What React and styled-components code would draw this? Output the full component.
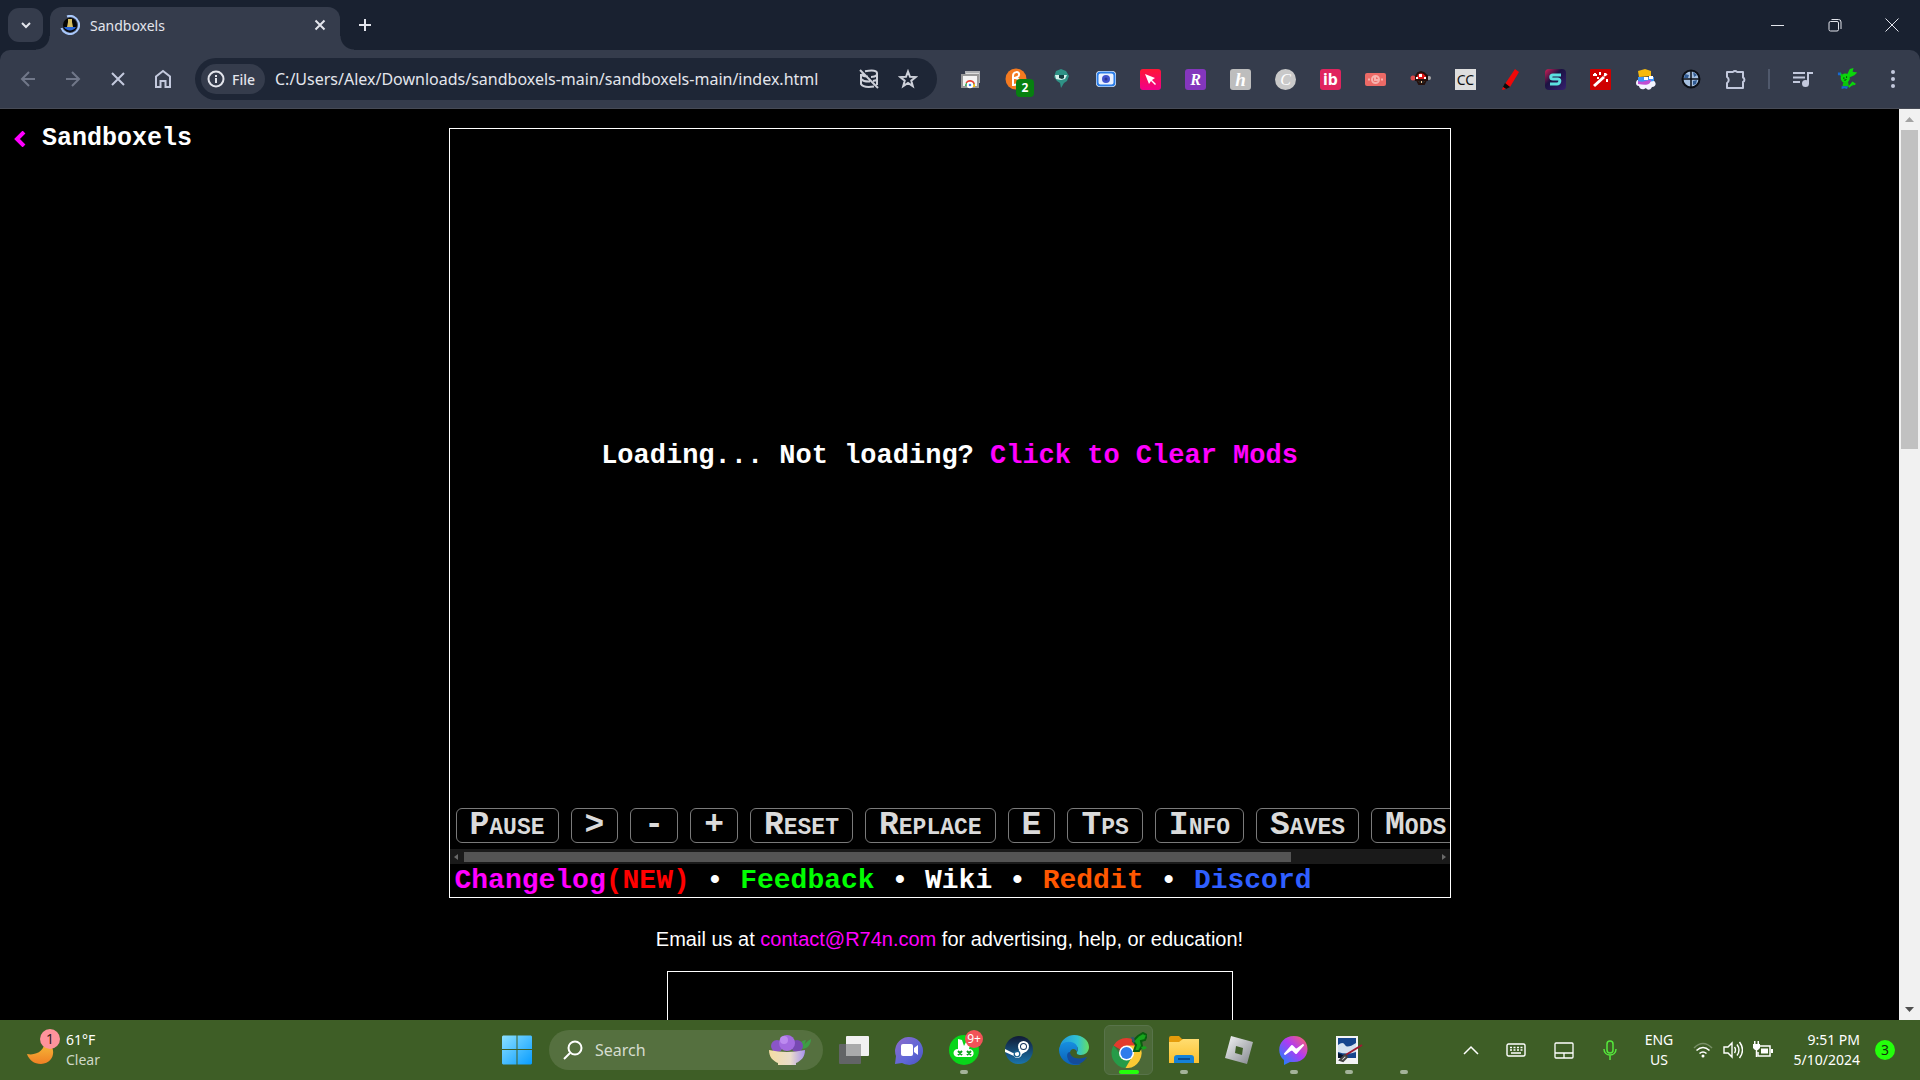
import React from "react";
import styled, { createGlobalStyle } from "styled-components";

const UI = '"Noto Sans", "Open Sans", sans-serif';
const PIXEL = '"Liberation Mono", "DejaVu Sans Mono", monospace';
const STRIP = "#192130";
const BAR = "#353c4c";

const Global = createGlobalStyle`
  * { box-sizing: border-box; }
  html, body { margin: 0; height: 100%; background: #000; overflow: hidden; }
  button { font: inherit; color: inherit; background: none; border: 0; padding: 0; margin: 0; }
  a { text-decoration: none; }
  svg { display: block; flex: none; }
`;

const Screen = styled.div`
  height: 100vh;
  display: flex;
  flex-direction: column;
  font-family: ${UI};
  overflow: hidden;
`;

/* ---------- browser chrome ---------- */

const TabStrip = styled.div`
  display: flex;
  align-items: center;
  height: 50px;
  padding-left: 8px;
  background: ${STRIP};
  color: #e3e5ec;
`;
const TabSearch = styled.button`
  width: 35px;
  height: 34px;
  border-radius: 11px;
  background: ${BAR};
  display: grid;
  place-items: center;
`;
const Tab = styled.div`
  position: relative;
  align-self: flex-end;
  width: 290px;
  height: 43px;
  margin-left: 7px;
  padding: 0 14px 7px 10px;
  border-radius: 12px 12px 0 0;
  background: ${BAR};
  display: flex;
  align-items: center;
  gap: 10px;
  font-size: 14px;
  &::before, &::after {
    content: "";
    position: absolute;
    bottom: 0;
    width: 14px;
    height: 14px;
  }
  &::before { right: 100%; background: radial-gradient(circle at 0 0, transparent 13px, ${BAR} 14px); }
  &::after { left: 100%; background: radial-gradient(circle at 100% 0, transparent 13px, ${BAR} 14px); }
`;
const TabTitle = styled.span`flex: 1;`;
const NewTab = styled.button`
  width: 36px;
  height: 36px;
  margin-left: 7px;
  display: grid;
  place-items: center;
`;
const WindowButtons = styled.div`
  margin-left: auto;
  display: flex;
`;
const WindowButton = styled.button`
  width: 57px;
  height: 50px;
  display: grid;
  place-items: center;
`;
const ToolbarWrap = styled.div`background: ${STRIP};`;
const Toolbar = styled.div`
  display: flex;
  align-items: center;
  height: 59px;
  padding: 0 5px;
  background: ${BAR};
  border-radius: 10px 10px 0 0;
  border-bottom: 1px solid #474b56;
  color: #c3c9dd;
`;
const Tool = styled.button`
  position: relative;
  flex: none;
  width: 45px;
  height: 42px;
  display: grid;
  place-items: center;
  opacity: ${(p) => (p.disabled ? 0.42 : 1)};
`;
const Divider = styled.div`
  flex: none;
  width: 2px;
  height: 20px;
  margin: 0 10px;
  background: #50596c;
`;
const Omnibox = styled.div`
  flex: 1;
  display: flex;
  align-items: center;
  height: 42px;
  margin: 0 11px 0 10px;
  padding: 0 10px 0 6px;
  border-radius: 21px;
  background: #1e2636;
`;
const FileChip = styled.button`
  display: flex;
  align-items: center;
  gap: 7px;
  width: 64px;
  height: 30px;
  padding-left: 6px;
  border-radius: 15px;
  background: ${BAR};
  color: #e3e5ec;
  font-size: 14px;
  font-weight: 500;
`;
const UrlInput = styled.input`
  flex: 1;
  min-width: 0;
  height: 32px;
  margin-left: 10px;
  padding: 0;
  border: 0;
  outline: 0;
  background: none;
  color: #e3e5ec;
  font: 16px ${UI};
`;
const OmniAction = styled.button`
  width: 39px;
  height: 36px;
  display: grid;
  place-items: center;
  color: #cdd0d9;
`;
const Tile = styled.span`
  display: grid;
  place-items: center;
  width: 21px;
  height: 21px;
  overflow: hidden;
  border-radius: ${(p) => p.$radius || "3px"};
  background: ${(p) => p.$bg};
  color: ${(p) => p.$fg || "#fff"};
  font-family: ${(p) => p.$font || UI};
  font-size: ${(p) => p.$size || "16px"};
  font-style: ${(p) => (p.$italic ? "italic" : "normal")};
  font-weight: ${(p) => p.$weight || 700};
  line-height: 21px;
`;
const CountBadge = styled.span`
  position: absolute;
  left: 23px;
  top: 21px;
  width: 18px;
  height: 18px;
  border-radius: 4px;
  background: #078010;
  color: #fff;
  font-size: 12px;
  font-weight: 700;
  line-height: 18px;
  text-align: center;
`;

/* ---------- page ---------- */

const Viewport = styled.div`
  flex: 1;
  min-height: 0;
  display: flex;
  background: #000;
`;
const Page = styled.div`
  flex: 1;
  display: grid;
  grid-template-columns: 1fr minmax(0, 1002px) 1fr;
  padding-top: 19px;
  overflow: hidden;
`;
const PageHeader = styled.header`
  display: flex;
  align-items: center;
  align-self: start;
  gap: 16px;
  height: 22px;
  padding-left: 13px;
  font-family: ${PIXEL};
  font-size: 25px;
  font-weight: 700;
  line-height: 22px;
  color: #fff;
`;
const BackLink = styled.a`
  display: block;
  color: #f0f;
`;
const Heading = styled.h1`
  margin: 0;
  font-size: 25px;
`;
const Column = styled.main`
  display: flex;
  flex-direction: column;
  align-items: center;
  min-height: 0;
`;
const Game = styled.section`
  flex: none;
  width: 100%;
  border: 1px solid #fff;
`;
const Stage = styled.div`
  height: 654px;
  display: grid;
  place-items: center;
`;
const Loading = styled.p`
  margin: 0;
  font: 700 27px/32px ${PIXEL};
  color: #fff;
  white-space: nowrap;
`;
const ColorLink = styled.a`
  color: ${(p) => p.$color};
`;
const Controls = styled.div`
  display: flex;
  gap: 12px;
  padding: 25px 0 6px 6px;
  overflow: hidden;
`;
const ControlButton = styled.button`
  flex: none;
  height: 35px;
  padding: 0 13px;
  border: 1px solid #7a7a7a;
  border-radius: 6px;
  color: #dadada;
  font: 700 33px/33px ${PIXEL};
  font-variant: small-caps;
`;
const HScroll = styled.div`
  display: flex;
  align-items: center;
  justify-content: space-between;
  height: 15px;
  padding: 0 4px;
  background: #1a1a1a;
`;
const HThumb = styled.div`
  width: 827px;
  height: 10px;
  margin: 0 auto 0 6px;
  background: #545454;
`;
const Links = styled.nav`
  height: 33px;
  padding-left: 5px;
  font: 700 28px/33px ${PIXEL};
  color: #fff;
  white-space: pre;
`;
const Contact = styled.p`
  margin: 29px 0 20px;
  font: 20px/24px "Liberation Sans", Arial, sans-serif;
  color: #fff;
`;
const AdFrame = styled.div`
  flex: 1;
  width: 566px;
  border: 1px solid #fff;
  border-bottom: 0;
`;
const VScroll = styled.div`
  flex: none;
  width: 21px;
  display: flex;
  flex-direction: column;
  align-items: center;
  background: #f1f1f1;
`;
const VArrow = styled.button`
  width: 21px;
  height: 21px;
  display: grid;
  place-items: center;
  color: ${(p) => (p.disabled ? "#a3a3a3" : "#505050")};
`;
const VThumb = styled.div`
  width: 17px;
  height: 35%;
  margin-bottom: auto;
  background: #c1c1c1;
`;

/* ---------- taskbar ---------- */

const Taskbar = styled.footer`
  flex: none;
  display: grid;
  grid-template-columns: 1fr auto 1fr;
  align-items: center;
  height: 60px;
  background: #3e5e26;
  color: #fff;
  font-size: 14px;
  line-height: 20px;
`;
const Weather = styled.button`
  display: flex;
  align-items: center;
  gap: 5px;
  padding-left: 26px;
  text-align: left;
`;
const WeatherIcon = styled.span`
  position: relative;
  width: 35px;
  height: 40px;
`;
const AlertBadge = styled.span`
  position: absolute;
  right: ${(p) => p.$right};
  top: ${(p) => p.$top};
  width: ${(p) => p.$size};
  height: ${(p) => p.$size};
  border-radius: 50%;
  background: ${(p) => p.$bg};
  color: ${(p) => p.$fg};
  font-size: ${(p) => p.$font};
  line-height: ${(p) => p.$size};
  text-align: center;
`;
const Soft = styled.span`
  display: block;
  color: #cfd8c8;
`;
const Line = styled.span`display: block;`;
const Apps = styled.div`
  display: flex;
  align-items: center;
`;
const App_ = styled.button`
  position: relative;
  width: 55px;
  height: 60px;
  display: grid;
  place-items: center;
  &::before {
    content: "";
    position: absolute;
    inset: 5px 3px;
    border-radius: 6px;
    border: ${(p) => (p.$active ? "1px solid #58734a" : "0")};
    background: ${(p) => (p.$active ? "#4c6938" : "transparent")};
  }
  &::after {
    content: "";
    position: absolute;
    bottom: 6px;
    left: 50%;
    width: ${(p) => (p.$active ? "20px" : "8px")};
    height: 4px;
    border-radius: 2px;
    transform: translateX(-50%);
    background: ${(p) => (p.$active ? "#24ff0b" : p.$running ? "#a3b39a" : "transparent")};
  }
  svg { position: relative; }
`;
const Search = styled.label`
  display: flex;
  align-items: center;
  gap: 12px;
  width: 274px;
  height: 40px;
  margin: 0 3px 0 5px;
  padding: 0 12px 0 14px;
  border-radius: 20px;
  background: #55703f;
`;
const SearchInput = styled.input`
  flex: 1;
  min-width: 0;
  padding: 0;
  border: 0;
  outline: 0;
  background: none;
  font: 16px ${UI};
  color: #fff;
  &::placeholder { color: #d5ddcf; opacity: 1; }
`;
const Tray = styled.div`
  display: flex;
  align-items: center;
  justify-content: flex-end;
  padding-right: 25px;
`;
const TrayButton = styled.button`
  display: flex;
  justify-content: center;
  align-items: center;
  gap: ${(p) => p.$gap || "0"};
  width: ${(p) => p.$w || "48px"};
  height: 50px;
`;
const Clock = styled.button`
  width: 80px;
  text-align: right;
`;
const Notice = styled.button`
  width: 20px;
  height: 20px;
  margin-left: 15px;
  border-radius: 50%;
  background: #24ff0b;
  color: #10300a;
  font-size: 14px;
  line-height: 20px;
`;

/* ---------- icons ---------- */

const Svg = ({ w = 20, h = w, vb = `0 0 ${w} ${h}`, sw = 2, children, ...rest }) => (
  <svg width={w} height={h} viewBox={vb} fill="none" stroke="currentColor" strokeWidth={sw} aria-hidden="true" {...rest}>
    {children}
  </svg>
);
const Solid = (p) => <Svg {...p} stroke="none" />;

const Favicon = () => (
  <Solid w={20}>
    <circle cx="10" cy="10" r="7" fill="#050505" />
    <path d="M4 12h12a7 7 0 0 1-12 0z" fill="#2a66d8" />
    <path d="M8 4h4v3l1 5H7l1-5z" fill="#d5bd62" />
    <path d="M7 1.5A9 9 0 1 1 1.5 13" stroke="#a8c7fa" strokeWidth="2.2" />
  </Solid>
);
const Rabbit = ({ s = 22 }) => (
  <Solid w={s} vb="0 0 22 24">
    <path d="M10 7 13 1l4-1-1 4 5 1-3 3-5 2z" fill="#0bd60b" />
    <circle cx="8" cy="11" r="5" fill="#0bd60b" />
    <path d="M6 15h5l1 5H5zM3 9 1 6l2-1 3 4zM11 21l5-5 3 2" fill="#0bc50b" />
    <path d="m12 21 4-5 3 2" stroke="#0bd60b" fill="none" />
    <path d="M4 20h7l-1 3-3-1-3 1zM0 5h3v3H0z" fill="#1769d1" />
    <path d="M6 10h1v2H6zM9 9h1v2H9zM6 13l4-1-2 2z" fill="#063c06" />
  </Solid>
);

const Webstore = () => (
  <Solid w={20}>
    <path d="M4 2h15v12H4z" fill="#aeb0b3" /><path d="M5 4h13v9H5z" fill="#ddd" />
    <path d="M1 6h16v12H1z" fill="#f4f4f4" stroke="#999" />
    <path d="M4 17a5 5 0 0 1 10 0z" fill="#34a853" /><path d="M4.500 14A5 5 0 0 1 14 15l-5-1z" fill="#ea4335" />
    <path d="M9 17l5-2v3H9z" fill="#fbbc05" /><circle cx="9" cy="16" r="2.300" fill="#4285f4" stroke="#fff" />
  </Solid>
);
const Bee = () => (
  <Solid w={22}>
    <circle cx="11" cy="11" r="10.500" fill="#f47a20" />
    <path d="M8 18V8c0-5 7-5 6-1 0 2-4 3-5 3 6-1 8 6 0 7" stroke="#fff" strokeWidth="2" />
  </Solid>
);
const Ghost = () => (
  <Solid w={16} h={20}>
    <path d="M3 2 8 0l5 2 3 5-2 5-3 2-3 5-1-5-3-2-3-4z" fill="#2f9286" />
    <path d="M2 6h12l-2 4-4 1-5-1z" fill="#d6f1ed" /><path d="M6 6h5v3l-2 1-3-1z" fill="#123f40" />
  </Solid>
);
const Camera = () => (
  <Solid w={22} h={18}>
    <rect x="1" y="1" width="20" height="16" rx="4" fill="#fff" />
    <rect x="2.500" y="2.500" width="17" height="13" rx="3" fill="#e9f1ff" stroke="#2a7de8" strokeWidth="2" />
    <circle cx="11" cy="9" r="4" fill="#4053cd" /><circle cx="11" cy="9" r="1.500" fill="#2a3596" />
  </Solid>
);
const Cursor = () => (
  <Solid w={21}>
    <defs><linearGradient id="cur" x2="0" y2="1"><stop stopColor="#ff1735" /><stop offset="1" stopColor="#f1008a" /></linearGradient></defs>
    <rect width="21" height="21" rx="3" fill="url(#cur)" />
    <path d="m5 5 10 4-3 2 4 4-1 1-4-4-2 3z" fill="#fff" />
  </Solid>
);
const Ticket = () => (
  <Solid w={21} h={13}>
    <rect width="21" height="13" rx="2" fill="#ec6a66" />
    <g stroke="#f7b3ae"><circle cx="10.500" cy="6.500" r="3.500" /><path d="M10 4v3h3M3 6.500h2m11 0h2" /></g>
  </Solid>
);
const Mushroom = () => (
  <Solid w={22} h={16}>
    <circle cx="3" cy="7" r="2.500" fill="#e04b4b" /><circle cx="19" cy="7" r="2" fill="#aaa" />
    <path d="M6 9V5l2-3 3-1 3 1 3 3v4z" fill="#df1717" stroke="#24100c" />
    <path d="M9 3h3v3H9zM6 6h2v2H6zm8 0h2v2h-2z" fill="#fff" />
    <path d="M7 9h9l-2 4H9z" fill="#f5c792" stroke="#24100c" /><path d="M10 10v2m3-2v2" stroke="#222" />
  </Solid>
);
const Marker = () => (
  <Solid w={18} h={21}>
    <path d="M13 0l4 3-9 15-5-3z" fill="#ef0808" /><path d="m3 14 5 4-4 2-3-2z" fill="#0b0b0b" />
    <path d="M1 18l3 2-4 1z" fill="#ef0808" />
  </Solid>
);
const Speed = () => (
  <Solid w={21}>
    <defs><linearGradient id="sp" x2="1" y2="1"><stop stopColor="#d21f55" /><stop offset=".4" stopColor="#1b1242" /><stop offset="1" stopColor="#35206f" /></linearGradient></defs>
    <rect width="21" height="21" rx="4" fill="url(#sp)" />
    <path d="M16 6H8c-3 0-3 4 0 4h5c3 0 2 5-1 5H5" stroke="#5ce1df" strokeWidth="3" />
  </Solid>
);
const Wand = () => (
  <Solid w={21}>
    <rect width="21" height="21" rx="1" fill="#cf0000" />
    <path d="M4 17 14 8" stroke="#fff" strokeWidth="3" /><path d="m14 7 3-2M5 4v3m-2-1h4m3-3v3m7 4v3m-9-5v2m7-6v2" stroke="#fff" />
  </Solid>
);
const Cloud = () => (
  <Solid w={21}>
    <path d="M1 14c0-4 4-4 5-3h10c6 0 6 7 1 7-2 4-5 3-6 1-4 3-7 0-7-2-2 0-3-1-3-3z" fill="#f4f4ff" />
    <path d="M3 8h16v4l-6 1H3z" fill="#3e93f5" /><path d="M3 2l7-2 6 2v5l-12 1z" fill="#f7ba0c" />
    <path d="M3 12c5 2 8-1 13-1-1 6-6 5-13 4z" fill="#c14ed3" /><path d="M9 8h4v3H9zm5-1h4v3h-4z" fill="#fff" />
  </Solid>
);
const GlobeX = () => (
  <Solid w={20}>
    <circle cx="10" cy="10" r="8.500" fill="#a5bfdf" stroke="#0b0f16" strokeWidth="2" />
    <path d="M4 5l4 1-1 3H3zm8 7 4-1-1 4-3 1zM12 3l4 3-3 2z" fill="#315c94" />
    <path d="M10 1v18M1 10h18" stroke="#0b0f16" strokeWidth="1.500" />
  </Solid>
);

const extensions = [
  ["Web Store", <Webstore />],
  ["Rewards", <Bee />, "2"],
  ["Ghost", <Ghost />],
  ["Screen capture", <Camera />],
  ["Custom cursor", <Cursor />],
  ["Rakuten", <Tile $bg="#8436bd" $font='"Liberation Serif", serif' $italic>R</Tile>],
  ["Honey", <Tile $bg="#bdbdbd" $font='"Liberation Serif", serif' $italic $size="19px">h</Tile>],
  ["Capital One", <Tile $bg="#c9c9c9" $radius="50%" $font='"Liberation Serif", serif' $italic $weight={400}>C</Tile>],
  ["Imgbb", <Tile $bg="#e0245e">ib</Tile>],
  ["Tickets", <Ticket />],
  ["Mushroom", <Mushroom />],
  ["Captions", <Tile $bg="#dedede" $fg="#111" $radius="0" $size="14px" $weight={400}>CC</Tile>],
  ["Marker", <Marker />],
  ["Speed", <Speed />],
  ["Magic wand", <Wand />],
  ["Cloud", <Cloud />],
  ["Globe", <GlobeX />],
];

const Puzzle = () => (
  <Svg w={22}><path d="M8 4a2.500 2.500 0 0 1 4 0h6v5.500a2.500 2.500 0 0 1 0 4.500v6H2v-5a3.500 3.500 0 0 0 0-6V4z" strokeLinejoin="round" /></Svg>
);

/* taskbar artwork */
const WindowsLogo = () => (
  <Solid w={30}>
    <defs><linearGradient id="win" x2="1" y2="1"><stop stopColor="#8be0ff" /><stop offset="1" stopColor="#089cff" /></linearGradient></defs>
    <path d="M1 .5h13.500V14H0V1.500zM15.500.500H29l1 1V14H15.500zM0 15h14.500v14.500H1l-1-1zm15.500 0H30v13.500l-1 1H15.500z" fill="url(#win)" />
  </Solid>
);
const Bowl = () => (
  <Solid w={42} h={30}>
    <path d="M29 14c0-5 4-9 8-9l-3 9zm4 0c2-5 5-8 9-10 0 6-4 10-9 10z" fill="#3e9e45" />
    <circle cx="8" cy="11" r="6" fill="#8a55c7" /><circle cx="28" cy="11" r="6" fill="#7749b2" /><circle cx="18" cy="8" r="8" fill="#a46be0" />
    <circle cx="15" cy="5" r="4" fill="#bd8bf0" />
    <defs><linearGradient id="bowl"><stop stopColor="#f4dda3" /><stop offset=".6" stopColor="#e9dccb" /><stop offset="1" stopColor="#a793ed" /></linearGradient></defs>
    <path d="M0 15q18 4 36 0c0 7-4 11-9 13v2H9v-2C4 26 0 22 0 15z" fill="url(#bowl)" />
  </Solid>
);
const TaskView = () => (
  <Solid w={30} h={28}>
    <rect y="8" width="22" height="20" rx="1" fill="#626466" />
    <rect x="7" width="23" height="20" rx="1" fill="#f1f1f1" /><path d="M7 8h15v12H7z" fill="#a9aaab" />
  </Solid>
);
const Chat = () => (
  <Solid w={30}>
    <defs><linearGradient id="chat" x2="1" y2="1"><stop stopColor="#8e6bc8" /><stop offset=".6" stopColor="#5f68d8" /><stop offset="1" stopColor="#4a50bd" /></linearGradient></defs>
    <path d="M1 29l1-8A14 14 0 1 1 8 28z" fill="url(#chat)" />
    <rect x="7" y="9" width="12" height="12" rx="2" fill="#fff" /><path d="m20 13 4-3v10l-4-3z" fill="#fff" />
  </Solid>
);
const Clover = () => (
  <Solid w={30}>
    <circle cx="15" cy="15" r="15" fill="#08d61a" />
    <path d="M9 4l4 1 2 6 3-6 4 1-2 8c6 0 6 8 1 8H9c-6 0-6-8 0-8z" fill="#fff" />
    <path d="M9 16l4 4m-4 0 4-4m5 0 4 4m-4 0 4-4" stroke="#08a01a" strokeWidth="2" />
  </Solid>
);
const Steam = () => (
  <Solid w={28}>
    <defs><linearGradient id="stm" x2="0" y2="1"><stop stopColor="#111a35" /><stop offset="1" stopColor="#1a74ab" /></linearGradient></defs>
    <circle cx="14" cy="14" r="14" fill="url(#stm)" />
    <path d="M0 13l8 4 5-1 3-5 6 4-5 3c-1 5-7 5-8 2L0 16z" fill="#fff" />
    <circle cx="18.500" cy="10.500" r="4.500" fill="#17355c" stroke="#fff" strokeWidth="2" />
    <circle cx="18.500" cy="10.500" r="2.500" fill="#fff" />
    <circle cx="12" cy="18" r="2.800" stroke="#17618f" strokeWidth="1.300" />
  </Solid>
);
const Edge = () => (
  <Solid w={30}>
    <defs>
      <linearGradient id="ed1" x2="1"><stop stopColor="#2096dd" /><stop offset=".6" stopColor="#30c2d4" /><stop offset="1" stopColor="#66df62" /></linearGradient>
      <linearGradient id="ed2" x2="0" y2="1"><stop stopColor="#168fe0" /><stop offset="1" stopColor="#0c5fb6" /></linearGradient>
    </defs>
    <path d="M1 11C3 4 9 0 15 0c9 0 15 6 15 12 0 5-4 8-8 8-3 0-5-1-4-3 4-5-4-11-17-6z" fill="url(#ed1)" />
    <path d="M0 15c0-9 14-11 18-4 1 2 1 4 0 6-1-4-7-4-7 1 0 6 5 10 11 11-11 4-22-4-22-14z" fill="url(#ed2)" />
    <path d="M11 17c0 6 8 8 17 5-4 7-11 9-16 6-5-4-5-11-1-11z" fill="#134c9c" />
  </Solid>
);
const ChromeIcon = () => (
  <Solid w={36} h={36}>
    <path d="M15.500 21 2.500 13.500a15 15 0 0 1 26 0z" fill="#e33b2e" />
    <path d="M15.500 21h-7L2.500 13.500a15 15 0 0 0 12 22.500l7-11z" fill="#269b48" />
    <path d="M15.500 13.500h13A15 15 0 0 1 14.500 36l7-12z" fill="#fcc934" />
    <circle cx="15.500" cy="21" r="7.500" fill="#fff" /><circle cx="15.500" cy="21" r="6" fill="#2f7cec" />
    <path d="M22 9l5-5 5-3 4 2-2 5-4 1 1 5-3 5h-5l2-6z" fill="#16a51b" stroke="#095d0f" />
    <path d="m30 15 4-1 2 2-4 2z" fill="#16a51b" /><path d="M20 5h3l1 5-2 1z" fill="#36536b" />
  </Solid>
);
const Folder = () => (
  <Solid w={30} h={28}>
    <path d="M0 2q0-2 2-2h8l3 3h17v8H0z" fill="#e59c0b" />
    <defs><linearGradient id="fold" x2="0" y2="1"><stop stopColor="#ffdd70" /><stop offset="1" stopColor="#fcc02e" /></linearGradient></defs>
    <path d="M0 6h10l4-3h16v24H0z" fill="url(#fold)" />
    <path d="M5 27v-5q0-3 3-3h14q3 0 3 3v5z" fill="#1682d8" /><path d="M9 23h12" stroke="#0b4d91" />
  </Solid>
);
const Roblox = () => (
  <Solid w={28}>
    <defs><linearGradient id="rbx" x2="1" y2="1"><stop stopColor="#f6f7f8" /><stop offset="1" stopColor="#81858b" /></linearGradient></defs>
    <path fillRule="evenodd" d="M6 0l22 6-6 22L0 22zM11 10l-1 7 7 2 1-7z" fill="url(#rbx)" />
  </Solid>
);
const Messenger = () => (
  <Solid w={30}>
    <defs><linearGradient id="msg" x1="1" x2="0" y2="1"><stop stopColor="#ff6761" /><stop offset=".45" stopColor="#b03af3" /><stop offset="1" stopColor="#098cff" /></linearGradient></defs>
    <path d="M15 1c18 0 18 26 0 26H11l-6 3v-5C-4 18 0 1 15 1z" fill="url(#msg)" />
    <path d="m6 19 7-8 4 4 7-5-7 8-4-4z" fill="#fff" stroke="#fff" strokeLinejoin="round" />
  </Solid>
);
const Paint = () => (
  <Solid w={28}>
    <path d="M1 0h22v28H1z" fill="#f3f4f5" /><path d="M3 2h18v20H3z" fill="#16458d" />
    <path d="M3 9q5-4 7 0t11-2v9q-9 3-18 0z" fill="#d4e1ef" /><path d="M3 17l5 2 4-1v4H3z" fill="#06142e" />
    <path d="m9 20 18-11" stroke="#9e1930" strokeWidth="2" /><path d="M5 24l5-5 2 2-4 4z" fill="#f2f2f2" stroke="#444" />
  </Solid>
);

const apps = [
  ["Task View", <TaskView />],
  ["Chat", <Chat />],
  ["Clover", <Clover />, "run", "9+"],
  ["Steam", <Steam />],
  ["Microsoft Edge", <Edge />],
  ["Google Chrome", <ChromeIcon />, "active"],
  ["File Explorer", <Folder />, "run"],
  ["Roblox", <Roblox />],
  ["Messenger", <Messenger />, "run"],
  ["Paint", <Paint />, "run"],
  ["Background app", null, "run"],
];

const controls = ["Pause", ">", "-", "+", "Reset", "Replace", "E", "Tps", "Info", "Saves", "Mods"];

function Browser() {
  return (
    <>
      <TabStrip>
        <TabSearch aria-label="Search tabs"><Svg w={12}><path d="m2 4 4 4 4-4" /></Svg></TabSearch>
        <Tab>
          <Favicon />
          <TabTitle>Sandboxels</TabTitle>
          <button aria-label="Close tab"><Svg w={12}><path d="m1.500 1.500 9 9m0-9-9 9" /></Svg></button>
        </Tab>
        <NewTab aria-label="New tab"><Svg w={14}><path d="M7 1v12M1 7h12" /></Svg></NewTab>
        <WindowButtons>
          <WindowButton aria-label="Minimize"><Svg w={13} sw={1}><path d="M0 6.500h13" /></Svg></WindowButton>
          <WindowButton aria-label="Restore"><Svg w={14} sw={1}><rect x="1" y="3.500" width="9.500" height="9.500" rx="1.500" /><path d="M3.500 1.500h7q2.500 0 2.500 2.500v7" /></Svg></WindowButton>
          <WindowButton aria-label="Close"><Svg w={14} sw={1}><path d="m.5.5 13 13m0-13-13 13" /></Svg></WindowButton>
        </WindowButtons>
      </TabStrip>
      <ToolbarWrap>
        <Toolbar>
          <Tool aria-label="Back" disabled><Svg w={16}><path d="M15 8H2m7-7L2 8l7 7" /></Svg></Tool>
          <Tool aria-label="Forward" disabled><Svg w={16}><path d="M1 8h13M7 1l7 7-7 7" /></Svg></Tool>
          <Tool aria-label="Stop loading"><Svg w={14}><path d="m1 1 12 12m0-12L1 13" /></Svg></Tool>
          <Tool aria-label="Home"><Svg w={18} h={20}><path d="M2 7.500 9 2l7 5.500V18h-4.500v-6h-5v6H2z" /></Svg></Tool>
          <Omnibox>
            <FileChip><Svg w={18}><circle cx="9" cy="9" r="7.500" /><path d="M9 8v5M9 5v2" /></Svg>File</FileChip>
            <UrlInput aria-label="Address" defaultValue="C:/Users/Alex/Downloads/sandboxels-main/sandboxels-main/index.html" />
            <OmniAction aria-label="Storage blocked"><Svg w={20}><path d="M6 2.200q12-2 12 2V16M2 5v10q2 4 13 2.500M2 5q2 3 7 2.500M2 10q3 3 9 2.500M12 8q4 0 6-2M14 12l4-1M1 1l18 18" /></Svg></OmniAction>
            <OmniAction aria-label="Bookmark"><Svg w={20}><path d="m10 2.500 2 5.300 5.700.300-4.400 3.600 1.500 5.500-4.800-3.200-4.800 3.200 1.500-5.500-4.400-3.600 5.700-.300z" /></Svg></OmniAction>
          </Omnibox>
          {extensions.map(([name, icon, count]) => (
            <Tool key={name} aria-label={name}>{icon}{count && <CountBadge>{count}</CountBadge>}</Tool>
          ))}
          <Tool aria-label="Extensions"><Puzzle /></Tool>
          <Divider />
          <Tool aria-label="Media controls"><Svg w={20} h={18}><path d="M0 3h12M0 7.500h12M0 12h7M15 14V3h5" /><circle cx="12.500" cy="13.500" r="2.500" fill="currentColor" /></Svg></Tool>
          <Tool aria-label="Profile"><Rabbit /></Tool>
          <Tool aria-label="Menu"><Solid w={4} h={18} ><g fill="#c3c9dd"><circle cx="2" cy="2" r="2" /><circle cx="2" cy="9" r="2" /><circle cx="2" cy="16" r="2" /></g></Solid></Tool>
        </Toolbar>
      </ToolbarWrap>
    </>
  );
}

function SandboxPage() {
  return (
    <Viewport>
      <Page>
        <PageHeader>
          <BackLink href="#" aria-label="Back"><Svg w={13} h={16} sw={4}><path d="M11 1 4 8l7 7" /></Svg></BackLink>
          <Heading>Sandboxels</Heading>
        </PageHeader>
        <Column>
          <Game>
            <Stage>
              <Loading>Loading... Not loading? <ColorLink href="#" $color="#f0f">Click to Clear Mods</ColorLink></Loading>
            </Stage>
            <Controls>
              {controls.map((c) => <ControlButton key={c}>{c}</ControlButton>)}
            </Controls>
            <HScroll>
              <Solid w={4} h={6}><path d="M4 0v6L0 3z" fill="#6a6a6a" /></Solid>
              <HThumb />
              <Solid w={4} h={6}><path d="M0 0v6l4-3z" fill="#6a6a6a" /></Solid>
            </HScroll>
            <Links>
              <ColorLink href="#" $color="#f0f">Changelog</ColorLink>
              <ColorLink href="#" $color="#f00">(NEW)</ColorLink>{" • "}
              <ColorLink href="#" $color="#0f0">Feedback</ColorLink>{" • "}
              <ColorLink href="#" $color="#fff">Wiki</ColorLink>{" • "}
              <ColorLink href="#" $color="#ff5700">Reddit</ColorLink>{" • "}
              <ColorLink href="#" $color="#2f5fff">Discord</ColorLink>
            </Links>
          </Game>
          <Contact>Email us at <ColorLink href="#" $color="#f0f">contact@R74n.com</ColorLink> for advertising, help, or education!</Contact>
          <AdFrame />
        </Column>
      </Page>
      <VScroll>
        <VArrow aria-label="Scroll up" disabled><Solid w={9} h={5}><path d="M0 5h9L4.500 0z" fill="#a3a3a3" /></Solid></VArrow>
        <VThumb />
        <VArrow aria-label="Scroll down"><Solid w={9} h={5}><path d="M0 0h9L4.500 5z" fill="#505050" /></Solid></VArrow>
      </VScroll>
    </Viewport>
  );
}

function WindowsTaskbar() {
  return (
    <Taskbar>
      <Weather>
        <WeatherIcon>
          <Solid w={30} h={40}>
            <defs><linearGradient id="moon" x2="0" y2="1"><stop stopColor="#f6c33c" /><stop offset="1" stopColor="#f08024" /></linearGradient></defs>
            <path d="M1 24c10 2 18-4 18-14 11 4 12 23-4 24-7 0-12-4-14-10z" fill="url(#moon)" />
          </Solid>
          <AlertBadge $right="1px" $top="-1px" $size="20px" $bg="#ff939c" $fg="#3b1b20" $font="14px">1</AlertBadge>
        </WeatherIcon>
        <span><Line>61°F</Line><Soft>Clear</Soft></span>
      </Weather>
      <Apps>
        <App_ aria-label="Start"><WindowsLogo /></App_>
        <Search>
          <Svg w={20}><circle cx="12" cy="8" r="6.500" /><path d="m7 13-6 6" /></Svg>
          <SearchInput placeholder="Search" aria-label="Search" />
          <Bowl />
        </Search>
        {apps.map(([name, icon, state, badge]) => (
          <App_ key={name} aria-label={name} $running={state === "run"} $active={state === "active"}>
            {icon}
            {badge && <AlertBadge $right="8px" $top="10px" $size="18px" $bg="#f25358" $fg="#fff" $font="12px">{badge}</AlertBadge>}
          </App_>
        ))}
      </Apps>
      <Tray>
        <TrayButton aria-label="Show hidden icons" $w="42px"><Svg w={16} h={10} sw={1.5}><path d="m1 9 7-7 7 7" /></Svg></TrayButton>
        <TrayButton aria-label="Touch keyboard"><Svg w={20} h={14} sw={1.4}><rect x="1" y="1" width="18" height="12" rx="1.500" /><path d="M4 4.500h2m1.500 0h2m1.500 0h2m1.500 0h2M4 7h2m1.500 0h2m1.500 0h2m1.500 0h2M5 10h10" /></Svg></TrayButton>
        <TrayButton aria-label="Touchpad"><Svg w={20} h={17} sw={1.3}><rect x="1" y="1" width="18" height="15" rx="1" /><path d="M1 11h18m-9 0v5" /></Svg></TrayButton>
        <TrayButton aria-label="Microphone" $w="44px"><Svg w={14} h={20} sw={1.5} color="#55e83c"><rect x="4" y="1" width="6" height="12" rx="3" /><path d="M1 9c0 8 12 8 12 0M7 15.500V20" /></Svg></TrayButton>
        <TrayButton aria-label="Language" $w="54px"><span><Line>ENG</Line><Line>US</Line></span></TrayButton>
        <TrayButton aria-label="Network, volume and battery" $w="94px" $gap="10px">
          <Svg w={20} h={16} sw={1.6}><path d="M1 6q9-9 18 0" opacity=".3" /><path d="M3.500 8.500q6.500-6 13 0M6.500 11.500q3.500-3 7 0" /><circle cx="10" cy="14" r="1.500" fill="#fff" stroke="none" /></Svg>
          <Svg w={20} h={18} sw={1.4}><path d="M1 6h4l4-4v14l-4-4H1zM11.500 6q2 3 0 6m2.500-8.500q4 5.500 0 11M16.500 1q6 8 0 16" /></Svg>
          <Svg w={21} h={18} sw={1.5}><path d="M7 5h10v10H5v-4" /><path d="M8 7.500h7v5H8zM0 3h7v4l-2 2H2L0 7zM1 0h1.500v3H1zM4.500 0H6v3H4.500zM18 8h2v4h-2z" fill="#fff" stroke="none" /><path d="M3.500 8v8" /></Svg>
        </TrayButton>
        <Clock aria-label="Date and time"><Line>9:51 PM</Line><Line>5/10/2024</Line></Clock>
        <Notice aria-label="Notifications">3</Notice>
      </Tray>
    </Taskbar>
  );
}

export default function App() {
  return (
    <Screen>
      <Global />
      <Browser />
      <SandboxPage />
      <WindowsTaskbar />
    </Screen>
  );
}
